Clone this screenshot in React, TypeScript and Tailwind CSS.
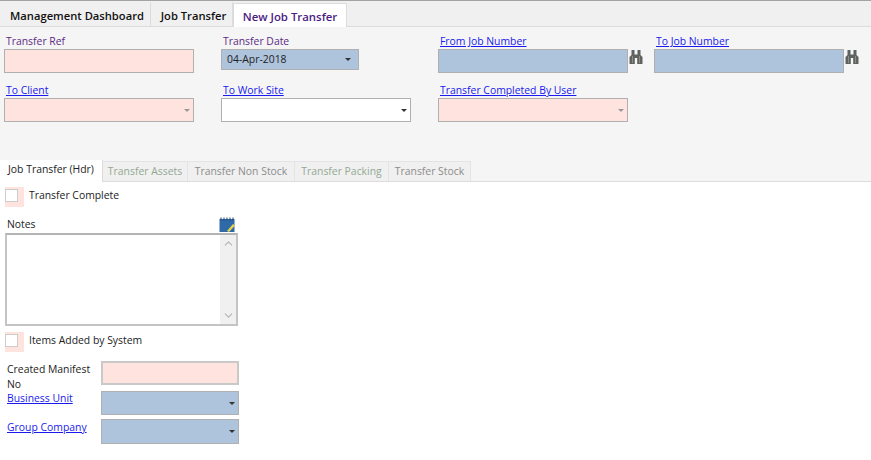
import { ChevronUp, ChevronDown } from "lucide-react";

const font = "font-['Open_Sans','Noto_Sans',sans-serif]";

function Caret({ faded }: { faded?: boolean }) {
  return (
    <span
      className={`ml-auto mr-[3px] h-0 w-0 border-x-[3px] border-t-[3px] border-x-transparent ${
        faded ? "border-t-[#999999]" : "border-t-[#333333]"
      }`}
    />
  );
}

function Binoculars() {
  return (
    <svg width="14" height="16" viewBox="0 0 14 16" className="ml-[1px] shrink-0">
      <path d="M2.500 1h3v4.500h3V1h3v5l2 2v7H8.200V9H5.800v6H.5V8l2-2z" fill="#5f6360" />
      <path d="M3.500 7v7M10.500 7v7" stroke="#8a8d8a" strokeWidth="1" />
    </svg>
  );
}

function NotesIcon() {
  return (
    <svg width="16" height="15" viewBox="0 0 16 15">
      <rect x="0.500" y="2" width="15" height="13" fill="#2f6aa8" />
      <path d="M2 0.500v3M5 0.500v3M8 0.500v3M11 0.500v3M14 0.500v3" stroke="#1f3f66" strokeWidth="1" />
      <path d="M8 14l6-7 2 1.500-6 6.500z" fill="#e8d44a" />
    </svg>
  );
}

function Label({ text, link, purple }: { text: string; link?: boolean; purple?: boolean }) {
  return (
    <div
      className={`h-[15px] pl-[2px] text-[10.4px] leading-[15px] whitespace-nowrap ${
        link ? "text-[#1a1aee] underline" : purple ? "text-[#5b2a86]" : "text-[#222222]"
      }`}
    >
      {text}
    </div>
  );
}

function Box({
  tone,
  caret,
  faded,
  className,
  children,
}: {
  tone: "pink" | "blue" | "white";
  caret?: boolean;
  faded?: boolean;
  className: string;
  children?: React.ReactNode;
}) {
  const bg = tone === "pink" ? "bg-[#ffe3df]" : tone === "blue" ? "bg-[#aec3dc]" : "bg-white";
  return (
    <div className={`flex items-center border border-[#b0b0b0] ${bg} ${className}`}>
      {children}
      {caret && <Caret faded={faded} />}
    </div>
  );
}

export default function App() {
  return (
    <div className={`${font} flex h-[460px] w-[871px] flex-col overflow-hidden bg-white text-[10.4px] text-[#222222]`}>
      {/* Main tabs */}
      <div className="flex h-[27px] items-end border-t border-b border-t-[#a3a3a3] border-b-[#dcdcdc] bg-[#f0f0f0]">
        <div className="flex h-[24px] w-[151px] items-center justify-center border-r border-[#dcdcdc] pl-[4px] pt-[5px] text-[11.2px] font-semibold text-[#111111]">
          Management Dashboard
        </div>
        <div className="flex h-[24px] w-[82px] items-center justify-center border-r border-[#dcdcdc] pl-[4px] pt-[5px] text-[11.2px] font-semibold text-[#111111]">
          Job Transfer
        </div>
        <div className="-mb-px flex h-[24px] w-[114px] items-center justify-center border border-b-0 border-[#dcdcdc] bg-white pt-[2px] text-[11.4px] font-semibold text-[#4b1b82]">
          New Job Transfer
        </div>
      </div>

      {/* Header form */}
      <div className="flex h-[133px] flex-col gap-[10px] bg-[#f5f5f5] pl-[4px] pt-[7px]">
        <div className="flex">
          <div className="w-[217px]">
            <Label text="Transfer Ref" purple />
            <Box tone="pink" className="h-[24px] w-[190px]" />
          </div>
          <div className="w-[217px]">
            <Label text="Transfer Date" purple />
            <Box tone="blue" caret className="h-[21px] w-[138px] pl-[5px] pr-[4px]">
              04-Apr-2018
            </Box>
          </div>
          <div className="w-[216px]">
            <Label text="From Job Number" link />
            <div className="flex">
              <Box tone="blue" className="h-[24px] w-[190px]" />
              <Binoculars />
            </div>
          </div>
          <div>
            <Label text="To Job Number" link />
            <div className="flex">
              <Box tone="blue" className="h-[24px] w-[190px]" />
              <Binoculars />
            </div>
          </div>
        </div>
        <div className="flex">
          <div className="w-[217px]">
            <Label text="To Client" link />
            <Box tone="pink" caret faded className="h-[24px] w-[190px]" />
          </div>
          <div className="w-[217px]">
            <Label text="To Work Site" link />
            <Box tone="white" caret className="h-[24px] w-[190px]" />
          </div>
          <div className="w-[216px]">
            <Label text="Transfer Completed By User" link />
            <Box tone="pink" caret faded className="h-[24px] w-[190px]" />
          </div>
        </div>
      </div>

      {/* Sub tabs */}
      <div className="flex h-[22px] items-end border-b border-[#dcdcdc] bg-[#f5f5f5]">
        <div className="-mb-px flex h-[22px] w-[103px] items-center justify-center border-r border-[#dcdcdc] bg-white pb-[2px] text-[#222222]">
          Job Transfer (Hdr)
        </div>
        <div className="flex h-[20px] w-[85px] items-center justify-center border-r border-t border-[#e4e4e4] bg-[#f0f0f0] text-[#93a893]">
          Transfer Assets
        </div>
        <div className="flex h-[20px] w-[107px] items-center justify-center border-r border-t border-[#e4e4e4] bg-[#f0f0f0] text-[#8c8c8c]">
          Transfer Non Stock
        </div>
        <div className="flex h-[20px] w-[94px] items-center justify-center border-r border-t border-[#e4e4e4] bg-[#f0f0f0] text-[#93a893]">
          Transfer Packing
        </div>
        <div className="flex h-[20px] w-[82px] items-center justify-center border-r border-t border-[#e4e4e4] bg-[#f0f0f0] text-[#8c8c8c]">
          Transfer Stock
        </div>
      </div>

      {/* Body */}
      <div className="flex flex-col pl-[5px] pt-[5px]">
        <div className="flex h-[20px] items-center">
          <div className="h-[20px] w-[19px] bg-[#ffe3df] pt-[2px]">
            <div className="h-[13px] w-[13px] border border-[#cccccc] bg-white" />
          </div>
          <span className="ml-[5px] -mt-[3px]">Transfer Complete</span>
        </div>

        <div className="mt-[8px] flex h-[17px] w-[230px] items-end justify-between pl-[2px]">
          <span className="leading-[15px]">Notes</span>
          <NotesIcon />
        </div>
        <div className="mt-[1px] flex h-[93px] w-[233px] justify-end border-2 border-[#c4c4c4] border-t-[#b4b4b4]">
          <div className="flex w-[16px] flex-col items-center justify-between bg-[#f0f0f0] py-[2px] text-[#b4b4b4]">
            <ChevronUp size={13} strokeWidth={2} />
            <ChevronDown size={13} strokeWidth={2} />
          </div>
        </div>

        <div className="mt-[6px] flex h-[20px] items-center">
          <div className="h-[20px] w-[19px] bg-[#ffe3df] pt-[2px]">
            <div className="h-[13px] w-[13px] border border-[#cccccc] bg-white" />
          </div>
          <span className="ml-[5px] -mt-[2px]">Items Added by System</span>
        </div>

        <div className="mt-[9px] flex w-[234px] items-start">
          <div className="w-[96px] pl-[2px] pt-[1px] leading-[15px]">
            Created Manifest
            <br />
            No
          </div>
          <Box tone="pink" className="h-[24px] w-[138px] border-2 border-[#c9c9c9]" />
        </div>
        <div className="flex w-[234px] items-start">
          <div className="w-[96px] pl-[2px] -mt-[1px] leading-[15px] text-[#1a1aee] underline">Business Unit</div>
          <Box tone="blue" caret className="-mt-[1px] h-[24px] w-[138px]" />
        </div>
        <div className="mt-[4px] flex w-[234px] items-start">
          <div className="w-[96px] pl-[2px] pt-[1px] leading-[15px] text-[#1a1aee] underline">Group Company</div>
          <Box tone="blue" caret className="h-[25px] w-[138px] border-[#aec3dc]" />
        </div>
      </div>
    </div>
  );
}
